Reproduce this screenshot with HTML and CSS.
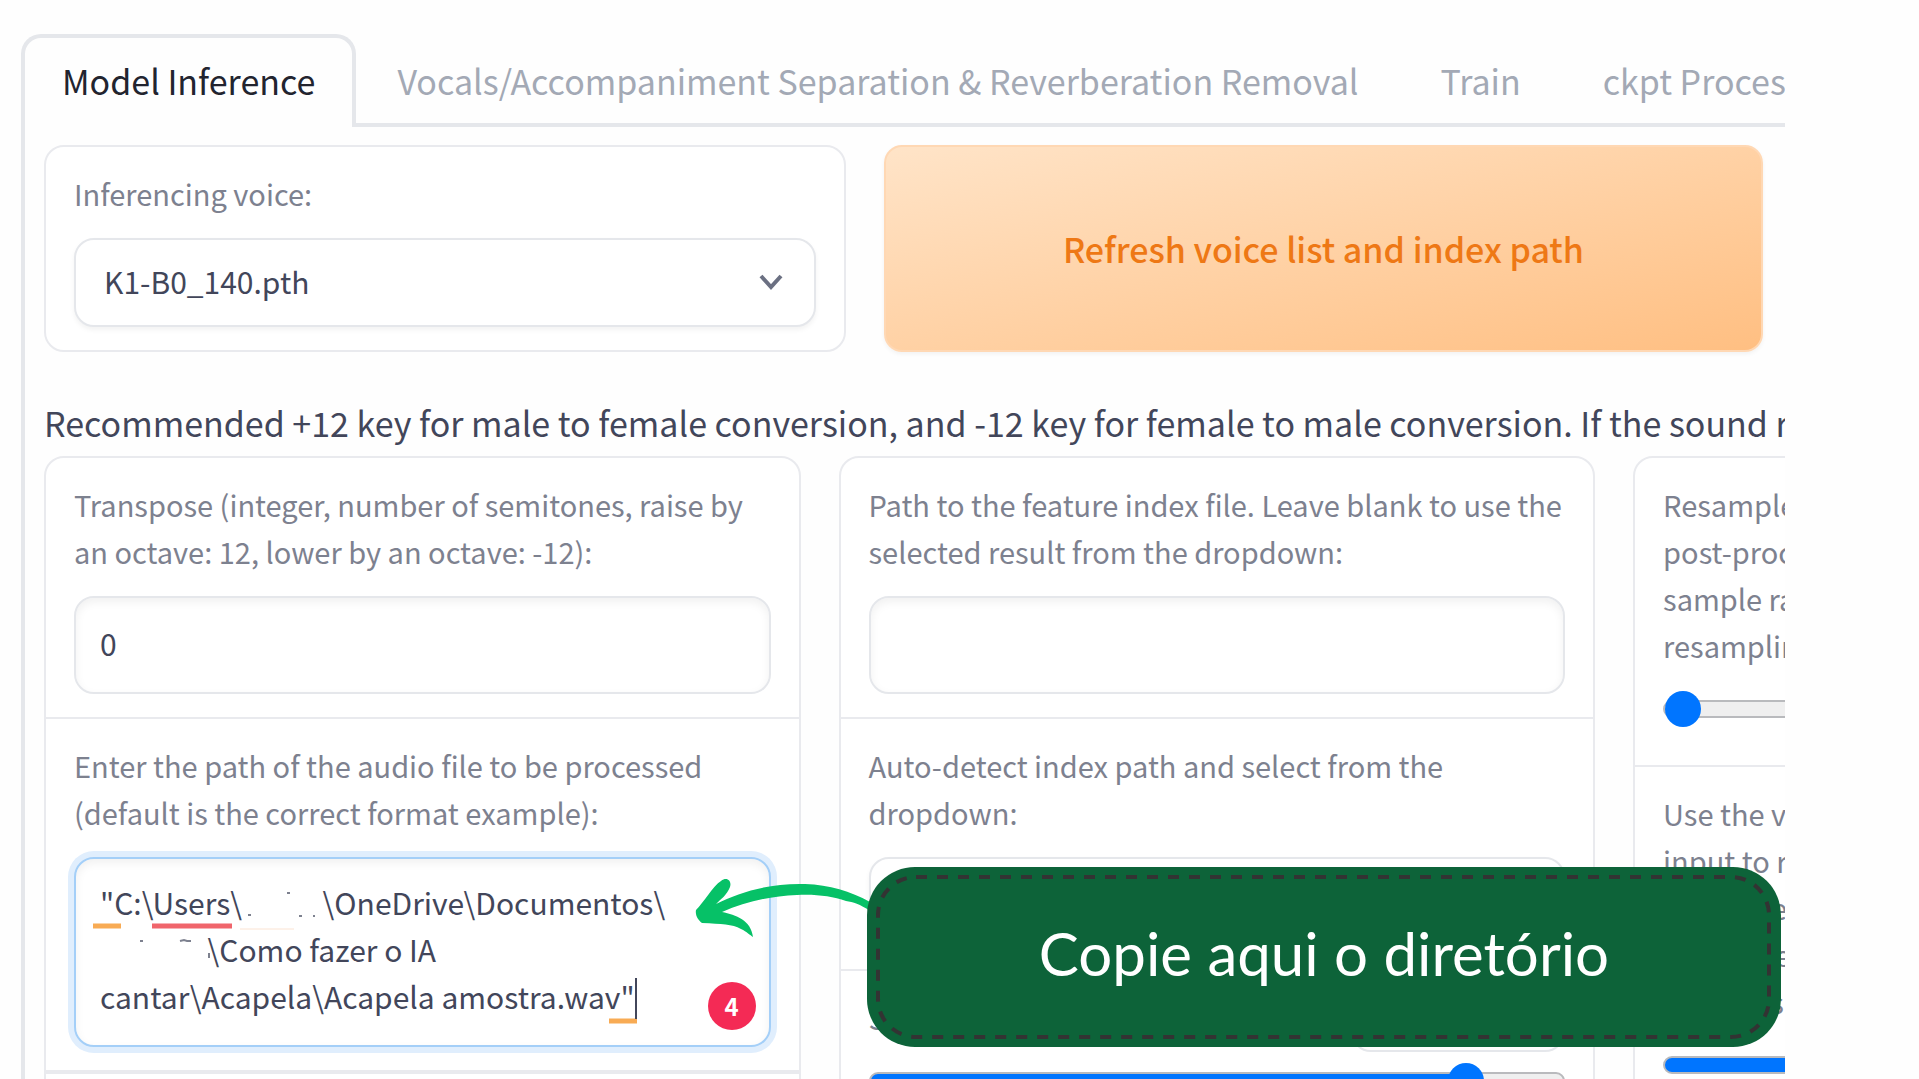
FILE: index.html
```
<!DOCTYPE html>
<html lang="pt-BR">
<head>
    <meta charset="UTF-8">
    <meta name="viewport" content="width=device-width, initial-scale=1.0">
    <title>Model Inference</title>
    <link rel="stylesheet" href="styles.css">
</head>
<body>
    <div class="app">
        <div class="workspace">
            <nav class="tabs">
                <button class="tab active">Model Inference</button>
                <button class="tab">Vocals/Accompaniment Separation &amp; Reverberation Removal</button>
                <button class="tab">Train</button>
                <button class="tab">ckpt Processing</button>
            </nav>

            <main class="panel">
                <div class="top-row">
                    <div class="card block">
                        <label for="voice">Inferencing voice:</label>
                        <div class="select-wrap">
                            <select id="voice" class="field select">
                                <option>K1-B0_140.pth</option>
                            </select>
                            <svg class="chevron" viewBox="0 0 24 16"><path d="M2 2l10 11L22 2"/></svg>
                        </div>
                    </div>
                    <button class="refresh">Refresh voice list and index path</button>
                </div>

                <p class="hint">Recommended +12 key for male to female conversion, and -12 key for female to male conversion. If the sound range goes too far</p>

                <div class="columns">
                    <div class="card">
                        <div class="block">
                            <label for="transpose">Transpose (integer, number of semitones, raise by an octave: 12, lower by an octave: -12):</label>
                            <input id="transpose" class="field" type="text" value="0">
                        </div>
                        <div class="block">
                            <label for="audio">Enter the path of the audio file to be processed (default is the correct format example):</label>
                            <div class="path-box">
                                <textarea id="audio" class="field path" rows="3" spellcheck="false">"C:\Users\&nbsp;&nbsp;&nbsp;&nbsp;&nbsp;&nbsp;&nbsp;&nbsp;&nbsp;&nbsp;&nbsp;&nbsp;\OneDrive\Documentos\
&nbsp;&nbsp;&nbsp;&nbsp;&nbsp;&nbsp;&nbsp;&nbsp;&nbsp;&nbsp;&nbsp;&nbsp;&nbsp;&nbsp;&nbsp;&nbsp;\Como fazer o IA
cantar\Acapela\Acapela amostra.wav"</textarea>
                                <!-- spelling marks and caret -->
                                <svg class="marks" viewBox="0 0 696 190">
                                    <path class="warn" d="M19 69h28M535 164h28"/>
                                    <path class="error" d="M78 69h80"/>
                                    <path class="faint" d="M166 72h54"/>
                                    <path class="caret" d="M562 121v41"/>
                                    <path class="speck" d="M174 58h3M213 36h3M225 59h3M239 59h2M66 84h3M106 84l4-1 3 1h4M135 96v5"/>
                                </svg>
                                <span class="badge">4</span>
                            </div>
                        </div>
                        <div class="block last"></div>
                    </div>

                    <div class="card">
                        <div class="block">
                            <label for="index">Path to the feature index file. Leave blank to use the selected result from the dropdown:</label>
                            <input id="index" class="field" type="text">
                        </div>
                        <div class="block">
                            <label for="autoindex">Auto-detect index path and select from the dropdown:</label>
                            <select id="autoindex" class="field select">
                                <option></option>
                            </select>
                        </div>
                        <div class="block">
                            <div class="head">
                                <label for="ratio">Search feature ratio:</label>
                                <input class="number" type="text" value="0.88" aria-label="Search feature ratio value">
                            </div>
                            <input id="ratio" class="range" type="range" min="0" max="100" value="88" style="--fill: 86%">
                        </div>
                    </div>

                    <div class="card">
                        <div class="block">
                            <div class="head">
                                <label for="resample">Resample the output audio in <span class="keep">post-processing</span> to the final sample rate. Set to 0 for no resampling:</label>
                                <input class="number" type="text" value="0" aria-label="Resample value">
                            </div>
                            <input id="resample" class="range" type="range" min="0" max="100" value="0" style="--fill: 0%">
                        </div>
                        <div class="block">
                            <div class="head">
                                <label for="envelope">Use the volume envelope of the input to replace or mix with the volume envelope of the output. The closer to 1, the more the output is used:</label>
                                <input class="number" type="text" value="1" aria-label="Volume envelope value">
                            </div>
                            <input id="envelope" class="range" type="range" min="0" max="100" value="100" style="--fill: 100%">
                        </div>
                    </div>
                </div>
            </main>
        </div>
    </div>

    <svg class="arrow" viewBox="0 0 180 66">
        <path d="M6 35C14 27 23 11 31 6C37 1 42 6 40 12C37 20 31 24 26 29C50 17 80 8 115 9C140 10 160 16 180 27V36C170 29 163 27 156 26C142 21 125 19 107 20C80 21 55 27 32 37C46 40 61 45 63 62C60 60 57 57 51 54C42 49 32 49 12 48C8 45 5 40 6 35Z"/>
    </svg>
    <div class="callout">
        <svg class="stitch"><rect rx="38" ry="38"/></svg>
        <span>Copie aqui o diretório</span>
    </div>
</body>
</html>
```
FILE: styles.css
```
* {
    box-sizing: border-box;
}

body {
    margin: 0;
    height: 100vh;
    overflow: hidden;
    position: relative;
    background: #fefefe;
    font-family: "Noto Sans CJK SC", "Noto Sans", sans-serif;
    color: #42465a;
}

button, input, select, textarea {
    font-family: inherit;
}

.app {
    width: 93%;
    height: 100%;
    padding: 34px 0 0 21px;
    overflow: hidden;
}

.workspace {
    width: 136.4%;
}

.tabs {
    display: flex;
    position: relative;
    border-bottom: 4px solid #e5e7eb;
}

.tab {
    height: 89px;
    padding: 0 37px;
    border: 4px solid transparent;
    border-bottom: none;
    border-radius: 20px 20px 0 0;
    background: none;
    font-size: 34px;
    color: #a3a9b5;
    white-space: nowrap;
}

.tab.active {
    height: 93px;
    margin-bottom: -4px;
    padding-bottom: 4px;
    border-color: #e5e7eb;
    background: #fefefe;
    color: #22242f;
}

.panel {
    padding: 18px 37px 40px 19px;
    border-left: 4px solid #e5e7eb;
}

.top-row {
    display: grid;
    grid-template-columns: 801fr 878fr 588fr;
    gap: 38px;
}

.card {
    border: 2px solid #e9eaee;
    border-radius: 20px;
    background: #fff;
}

.block {
    padding: 23px 28px 23px;
}

.block + .block {
    border-top: 2px solid #e9eaee;
}

.block.last {
    border-top-width: 4px;
}

label {
    display: block;
    margin-bottom: 21px;
    font-size: 29px;
    line-height: 47px;
    color: #7d818f;
}

.field {
    display: block;
    width: 100%;
    height: 98px;
    padding: 20px 24px 24px;
    border: 2px solid #e5e7eb;
    border-radius: 20px;
    background: #fff;
    box-shadow: inset 0 4px 10px rgba(0, 0, 0, 0.06);
    font-size: 30px;
    line-height: 47px;
    color: #42465a;
    outline: none;
}

.select {
    height: 89px;
    padding: 0 28px 2px;
    appearance: none;
    box-shadow: 0 3px 5px rgba(0, 0, 0, 0.05);
}

.select-wrap,
.path-box {
    position: relative;
}

.chevron {
    position: absolute;
    right: 33px;
    top: 36px;
    width: 24px;
    height: 16px;
    fill: none;
    stroke: #6b7082;
    stroke-width: 4;
}

.refresh {
    border: 2px solid #ffd8b4;
    border-radius: 18px;
    background: linear-gradient(to bottom right, #ffe4c8, #ffbf82);
    box-shadow: 0 2px 4px rgba(0, 0, 0, 0.05);
    font-size: 34px;
    font-weight: 500;
    color: #ee7815;
}

.hint {
    margin: 44px 0 6px;
    font-size: 34px;
    line-height: 54px;
    white-space: nowrap;
}

.columns {
    display: grid;
    grid-template-columns: repeat(3, 1fr);
    align-items: start;
    gap: 38px;
}

.columns .card {
    min-height: 700px;
}

.path {
    height: 190px;
    border-color: #a4cff8;
    box-shadow: 0 0 0 6px #e0eefd, inset 0 4px 10px rgba(0, 0, 0, 0.06);
    resize: none;
    overflow: hidden;
    white-space: pre;
}

.marks {
    position: absolute;
    inset: 0;
    width: 696px;
    height: 190px;
    fill: none;
    pointer-events: none;
}

.warn {
    stroke: #f8ab54;
    stroke-width: 5;
}

.error {
    stroke: #f0656c;
    stroke-width: 5;
}

.faint {
    stroke: #fbe3d2;
    stroke-width: 1;
}

.caret {
    stroke: #42465a;
    stroke-width: 2;
}

.speck {
    stroke: #7d818f;
    stroke-width: 2;
}

.badge {
    position: absolute;
    right: 15px;
    bottom: 17px;
    width: 48px;
    height: 48px;
    border-radius: 50%;
    background: #f42a55;
    color: #fff;
    font-size: 24px;
    font-weight: 700;
    line-height: 48px;
    text-align: center;
}

.head {
    display: flex;
    justify-content: space-between;
    align-items: flex-start;
    gap: 48px;
}

.head label {
    flex: 1;
}

.keep {
    white-space: nowrap;
}

.number {
    width: 214px;
    height: 58px;
    padding: 0 20px;
    border: 2px solid #e5e7eb;
    border-radius: 20px;
    background: #fff;
    font-size: 30px;
    color: #42465a;
}

.range {
    display: block;
    width: 100%;
    height: 18px;
    margin: 10px 0 24px;
    appearance: none;
    border: 2px solid #b9babd;
    border-radius: 9px;
    background: linear-gradient(to right, #0075ff var(--fill), #efefef var(--fill));
}

.range::-webkit-slider-thumb {
    appearance: none;
    width: 36px;
    height: 36px;
    border-radius: 50%;
    background: #0075ff;
}

.arrow {
    position: absolute;
    left: 690px;
    top: 875px;
    width: 180px;
    height: 66px;
    fill: #06c167;
}

.callout {
    position: absolute;
    left: 867px;
    top: 867px;
    display: flex;
    align-items: center;
    justify-content: center;
    width: 914px;
    height: 180px;
    padding-bottom: 8px;
    border-radius: 48px;
    background: #0d6339;
    color: #fff;
    font-family: Lato, sans-serif;
    font-size: 60px;
}

.stitch {
    position: absolute;
    inset: 0;
    width: 100%;
    height: 100%;
    fill: none;
    stroke: #333;
    stroke-width: 4;
    stroke-dasharray: 11 10;
}

.stitch rect {
    x: 11px;
    y: 10px;
    width: calc(100% - 23px);
    height: calc(100% - 20px);
}
```
